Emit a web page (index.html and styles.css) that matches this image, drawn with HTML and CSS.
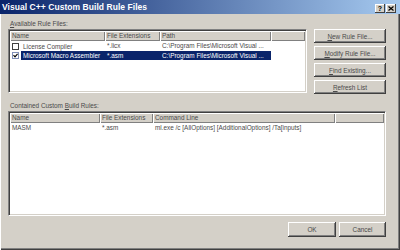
FILE: index.html
```html
<!DOCTYPE html>
<html lang="en">
<head>
    <meta charset="UTF-8">
    <title>Visual C++ Custom Build Rule Files</title>
    <link rel="stylesheet" href="styles.css">
</head>
<body>

<div class="dialog">
    <!-- Title bar -->
    <div class="titlebar">
        <span class="title">Visual C++ Custom Build Rule Files</span>
        <div class="caption-buttons">
            <span class="cap-btn">?</span>
            <span class="cap-btn close">
                <svg width="6" height="5" viewBox="0 0 6 5"><path d="M0.5 0.5 L5.5 4.5 M5.5 0.5 L0.5 4.5" stroke="#000" stroke-width="1.2"/></svg>
            </span>
        </div>
    </div>

    <div class="content">
        <!-- Available rule files -->
        <div class="top">
            <div class="left">
                <div class="label"><u>A</u>vailable Rule Files:</div>
                <div class="listbox top-list">
                    <div class="header">
                        <div class="hcell">Name</div>
                        <div class="hcell">File Extensions</div>
                        <div class="hcell">Path</div>
                        <div class="hcell"></div>
                    </div>
                    <div class="row">
                        <div class="cell name">
                            <span class="check"></span>
                            <span class="name-text">License Compiler</span>
                        </div>
                        <div class="cell">*.licx</div>
                        <div class="cell">C:\Program Files\Microsoft Visual ...</div>
                        <div class="cell"></div>
                    </div>
                    <div class="row selected">
                        <div class="cell name">
                            <span class="check checked">
                                <svg width="5" height="5" viewBox="0 0 5 5"><path d="M0.5 2.2 L2 3.8 L4.6 0.8" stroke="#000" stroke-width="1.2" fill="none"/></svg>
                            </span>
                            <span class="name-text">Microsoft Macro Assembler</span>
                        </div>
                        <div class="cell">*.asm</div>
                        <div class="cell">C:\Program Files\Microsoft Visual ...</div>
                        <div class="cell blank"></div>
                    </div>
                </div>
            </div>

            <div class="side-buttons">
                <button class="btn"><u>N</u>ew Rule File...</button>
                <button class="btn"><u>M</u>odify Rule File...</button>
                <button class="btn"><u>F</u>ind Existing...</button>
                <button class="btn"><u>R</u>efresh List</button>
            </div>
        </div>

        <!-- Contained build rules -->
        <div class="label second">Contained Custom <u>B</u>uild Rules:</div>
        <div class="listbox bottom-list">
            <div class="header">
                <div class="hcell">Name</div>
                <div class="hcell">File Extensions</div>
                <div class="hcell">Command Line</div>
                <div class="hcell"></div>
            </div>
            <div class="row">
                <div class="cell">MASM</div>
                <div class="cell">*.asm</div>
                <div class="cell">ml.exe /c [AllOptions] [AdditionalOptions] /Ta[inputs]</div>
                <div class="cell"></div>
            </div>
        </div>

        <!-- Dialog buttons -->
        <div class="footer">
            <button class="btn ok">OK</button>
            <button class="btn cancel">Cancel</button>
        </div>
    </div>
</div>

</body>
</html>
```

FILE: styles.css
```css
/* Basic styling */
body { margin: 0; font-family: "Liberation Sans", Arial, sans-serif; font-size: 6.4px; color: #4a4a4a; }
u { text-decoration: underline; text-underline-offset: 1px; }

.dialog {
    width: 400px;
    height: 250px;
    box-sizing: border-box;
    background-color: #d4d0c8;
    box-shadow: inset 1px 0 #fff, inset -1px -1px #404040, inset -2px -2px #808080;
    overflow: hidden;
}

/* Title bar */
.titlebar {
    height: 14px;
    display: flex;
    align-items: center;
    justify-content: space-between;
    padding: 0 4px 0 2px;
    background: linear-gradient(to right, #0a246a, #a6caf0);
}
.title { color: #fff; font-weight: bold; font-size: 8.5px; letter-spacing: 0.05px; }
.caption-buttons { display: flex; gap: 1px; margin-top: 2px; }
.cap-btn {
    width: 10px;
    height: 9px;
    box-sizing: border-box;
    display: flex;
    align-items: center;
    justify-content: center;
    background-color: #d4d0c8;
    box-shadow: inset -1px -1px #404040, inset 1px 1px #fff;
    color: #000;
    font-weight: bold;
    font-size: 7px;
}

/* Content */
.content { padding: 5px 14px 0 8px; }
.top { display: flex; gap: 7px; }
.left { width: 299px; }
.label { height: 10px; line-height: 10px; padding-left: 2px; }
.label.second { margin-top: 7px; }

/* List views */
.listbox {
    box-sizing: border-box;
    background-color: #fff;
    border: 1px solid;
    border-color: #808080 #fff #fff #808080;
    box-shadow: inset 1px 1px #404040, inset -1px -1px #d4d0c8;
    padding: 1px;
}
.top-list { height: 64px; }
.bottom-list { height: 105px; }
.header, .row { display: grid; }
.top-list .header, .top-list .row { grid-template-columns: 95px 55px 111px 1fr; }
.bottom-list .header, .bottom-list .row { grid-template-columns: 90px 53px 182px 1fr; }

.hcell {
    height: 10px;
    line-height: 10px;
    box-sizing: border-box;
    padding-left: 2px;
    background-color: #d4d0c8;
    box-shadow: inset 1px 1px #fff, inset -1px -1px #808080;
    white-space: nowrap;
    overflow: hidden;
}
.row { height: 10px; line-height: 9px; }
.row:first-of-type { margin-top: 1px; }
.cell { padding-left: 2px; white-space: nowrap; overflow: hidden; }
.cell.name { display: flex; align-items: center; padding-left: 2px; }
.name-text { padding-left: 2px; margin-left: 2px; flex: 1; }

.check {
    width: 7px;
    height: 7px;
    box-sizing: border-box;
    border: 1px solid #404040;
    background-color: #fff;
    display: flex;
    align-items: center;
    justify-content: center;
}

/* Selected row */
.row.selected .cell { background-color: #0a246a; color: #fff; height: 9px; }
.row.selected .cell.name { background-color: transparent; }
.row.selected .name-text { background-color: #0a246a; height: 9px; }
.row.selected .cell.blank { background-color: transparent; }
.row.selected .check { border-color: #8090b8; }

/* Buttons */
.btn {
    font-family: inherit;
    font-size: 6.4px;
    color: #4a4a4a;
    background-color: #d4d0c8;
    border: none;
    padding: 0;
    box-shadow: inset -1px -1px #404040, inset 1px 1px #fff, inset -2px -2px #808080;
}
.side-buttons { display: flex; flex-direction: column; gap: 3px; margin-top: 10px; }
.side-buttons .btn { width: 72px; height: 14px; }

.footer { display: flex; justify-content: flex-end; gap: 3px; margin-top: 6px; }
.footer .btn { height: 15px; }
.btn.ok { width: 48px; }
.btn.cancel { width: 47px; }
```
